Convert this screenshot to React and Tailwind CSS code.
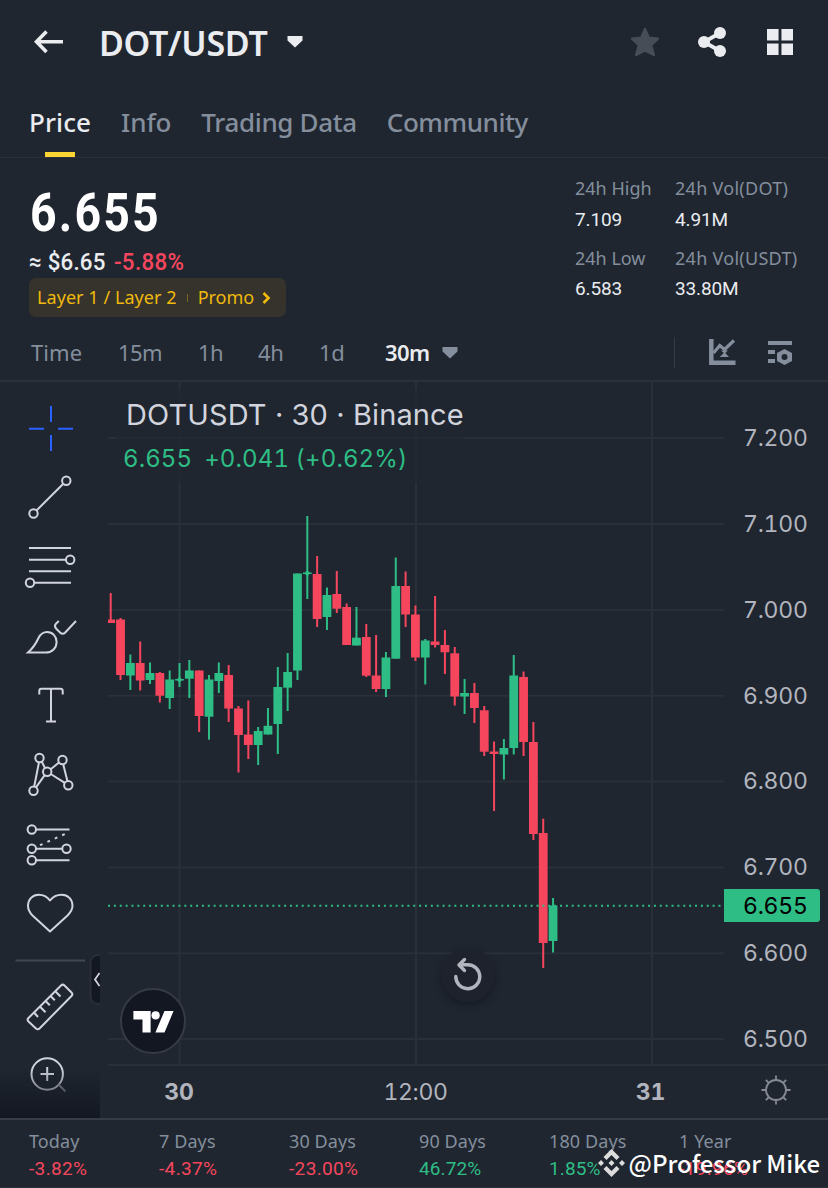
import React from "react";

const UP = "#2ebd85";
const DOWN = "#f6465d";

// [colour, high, body top, body bottom, low]
const candles = [
  [DOWN, 593, 619.5, 623, 623], [DOWN, 618, 619.5, 675, 680], [UP, 654.5, 663, 675.5, 690],
  [DOWN, 641.5, 663, 680.5, 690.5], [UP, 662.5, 673, 680, 684], [DOWN, 672, 673, 695.7, 702.5],
  [UP, 670.5, 679.5, 698, 709], [UP, 663, 679, 680.5, 687], [UP, 660, 670.5, 678.7, 698],
  [DOWN, 670.5, 670.5, 716, 732], [UP, 675, 679.5, 716.7, 739.7], [UP, 662.5, 673, 681, 693],
  [DOWN, 665, 675, 708.5, 722], [DOWN, 706, 708.5, 735, 772.5], [DOWN, 700.5, 734.5, 745, 759],
  [UP, 727, 731, 745, 765], [UP, 708, 725.8, 734.5, 734.5], [UP, 667, 687, 724, 754],
  [UP, 653, 672, 687.7, 711], [UP, 573.5, 573.5, 670.5, 680], [UP, 516, 572.5, 574, 599],
  [DOWN, 556, 574, 619, 627], [UP, 587.5, 595, 617, 630], [DOWN, 571, 594, 608.7, 613],
  [DOWN, 603.5, 607, 645, 645], [UP, 607, 637.7, 645.5, 645.5], [DOWN, 624, 637, 675.7, 677],
  [DOWN, 635, 675.5, 689, 692], [UP, 652, 657.5, 689, 697], [UP, 557.5, 586, 658.7, 658.7],
  [DOWN, 571.5, 586, 614.5, 627], [DOWN, 605.5, 614.5, 657.5, 661], [UP, 639, 640.5, 657.5, 684.5],
  [DOWN, 596, 641.5, 645, 647.5], [DOWN, 630, 645, 652.3, 674], [DOWN, 647, 653.3, 696.5, 705.5],
  [UP, 679, 693, 696.5, 714], [DOWN, 683, 693, 708, 723], [DOWN, 706, 710.3, 751.7, 756],
  [DOWN, 741.5, 751.5, 754, 811], [UP, 739, 748, 754.5, 779.5], [UP, 655, 675.5, 748, 754.5],
  [DOWN, 671.5, 677, 742, 756], [DOWN, 722, 742, 834, 840], [DOWN, 818.7, 833, 943, 968],
  [UP, 898, 905.5, 941, 952.5],
];

const gridY = [438, 524, 610, 695.8, 781.6, 867.4, 953.2, 1039];
const gridX = [179.5, 416, 652];

function Plot() {
  return (
    <svg className="block h-[682px] w-[616px] shrink-0" viewBox="108 382 616 682">
      <g stroke="#2a2f38" strokeWidth="2">
        {gridY.map((y) => <path key={y} d={`M108 ${y}H724`} />)}
        {gridX.map((x) => <path key={x} d={`M${x} 382V1064`} />)}
      </g>
      {candles.map(([c, hi, top, bot, lo], i) => {
        const x = 110.7 + i * 9.83;
        return (
          <g key={i} fill={c}>
            <rect x={x - 1} y={hi} width="2" height={lo - hi} />
            <rect x={x - 4.4} y={top} width="8.8" height={bot - top} />
            {bot - top < 2 && <circle cx={x} cy={(top + bot) / 2} r="2.2" />}
          </g>
        );
      })}
      <path d="M108 905.8H724" stroke={UP} strokeWidth="2" strokeDasharray="2 3.87" />
    </svg>
  );
}

function Tool({ top, height = 69, color = "#d1d4dc", children }) {
  return (
    <svg width="100" height={height} viewBox={`0 ${top} 100 ${height}`} className="block shrink-0" fill="none" stroke={color} strokeWidth="2">
      {children}
    </svg>
  );
}

function Toolbar() {
  return (
    <div className="relative flex h-[736px] w-[100px] shrink-0 flex-col overflow-hidden pt-[12px]">
      <div className="absolute bottom-0 left-0 h-[50px] w-full bg-linear-to-b from-[#131722]/0 to-[#131722]" />
      <Tool top={394} color="#2962ff">
        <path d="M51 406V422M51 435V451M29 428.800H44M58 428.800H73" />
      </Tool>
      <Tool top={463}>
        <circle cx="66.3" cy="480.7" r="4.2" /><circle cx="33.5" cy="513.5" r="4.2" />
        <path d="M36.5 510.5L63.3 483.7" />
      </Tool>
      <Tool top={532}>
        <path d="M29 548H71M29 559.700H66M29 571.300H71M34 582.700H71" />
        <circle cx="70.2" cy="559.7" r="4.2" /><circle cx="30" cy="582.7" r="4.2" />
      </Tool>
      <Tool top={601}>
        <path d="M28 652.600C33 648 36 643.500 38.500 638C40.500 634 43.500 632 47.200 632C52.500 632 56.600 636.500 56.600 642C56.600 648 52 652.600 46 652.600Z" />
        <path d="M58.800 621L56.200 623.400C54.800 624.800 54.800 627 56 628.500L60.300 632.800C61.500 634 63.700 634 65 632.800L76 621" />
      </Tool>
      <Tool top={670}>
        <path d="M39.300 694.500V691C39.300 689.500 40 688.800 41.300 688.800H60.500C62 688.800 62.700 689.500 62.700 691V694.500M51 689V721.500M46 721.500H56" />
      </Tool>
      <Tool top={739}>
        <circle cx="39.500" cy="758" r="4.200" /><circle cx="62.500" cy="760" r="4.200" />
        <circle cx="47.200" cy="771.700" r="4.200" /><circle cx="33.500" cy="790.700" r="4.200" /><circle cx="68.300" cy="785.200" r="4.200" />
        <path d="M39 762.200L34.200 786.500M41.800 761.700L45 768M50.700 769.200L59 762.500M44.700 775.200L36 787.400M50.700 774L64.800 782.800M63.200 764.200L67.400 781" />
      </Tool>
      <Tool top={808}>
        <circle cx="31.800" cy="829.500" r="4.200" /><circle cx="31.800" cy="848.700" r="4.200" /><circle cx="31.800" cy="860.300" r="4.200" /><circle cx="66.500" cy="848.700" r="4.200" />
        <path d="M36 829.500H69.500M36 848.700H62M36 860.300H69.500" />
        <path d="M40 845.200L69 832.200" strokeDasharray="2.800 5.300" />
      </Tool>
      <Tool top={877}>
        <path d="M50 900.500C47 896.500 43 894.700 38.800 894.700C32.500 894.700 28 899.500 28 905.800C28 910 29.500 912.500 32.500 915.500L50 931.500L67.500 915.500C70.500 912.500 72.500 910 72.500 905.800C72.500 899.500 68 894.700 61.700 894.700C57.500 894.700 53 896.500 50 900.500Z" strokeLinejoin="round" />
      </Tool>
      <Tool top={946} height={29}>
        <path d="M15.500 960.500H85" stroke="#434651" />
      </Tool>
      <Tool top={975} height={66}>
        <path d="M61 985.500C62 984.500 63.500 984.500 64.500 985.500L71.500 992.500C72.500 993.500 72.500 995 71.500 996L39.500 1028.500C38.500 1029.500 37 1029.500 36 1028.500L28.500 1021.500C27.500 1020.500 27.500 1019 28.500 1018ZM34.500 1013L38 1017M40.300 1007L45.500 1012.300M46 1001.500L49.800 1005.300M51 996.500L54.800 1000.300M55.500 991.500L60.500 996.500" />
      </Tool>
      <Tool top={1041} height={77}>
        <circle cx="47.200" cy="1074" r="15.700" />
        <path d="M40.500 1074H54M47.200 1067V1081" />
        <path d="M58.500 1084.500L65.500 1091.500" stroke="#8a8d97" />
      </Tool>
      <svg className="absolute right-0 top-[572px]" width="11" height="52" viewBox="89 954 11 52" fill="none">
        <path d="M101 955H99C94 955 90.500 958 90.500 963V996C90.500 1001 94 1004 99 1004H101" fill="#131722" stroke="#2a2e39" strokeWidth="2" />
        <path d="M99.500 973L95 979.500L99.500 986" stroke="#d1d4dc" strokeWidth="1.800" />
      </svg>
    </div>
  );
}

const prices = ["7.200", "7.100", "7.000", "6.900", "6.800", "6.700", "6.600", "6.500"];

function Chart() {
  return (
    <div className="flex h-[736px]">
      <Toolbar />
      <div className="relative flex w-[728px] flex-col font-['Inter',sans-serif] tabular-nums">
        <div className="flex h-[682px] pl-[8px]">
          <Plot />
          <div className="relative w-[104px]">
            <div className="flex flex-col pl-[19px] pt-[13px] text-[23px] text-[#b2b5be] tracking-[-0.25px]">
              {prices.map((p) => <div key={p} className="h-[85.85px] leading-[86px]">{p}</div>)}
            </div>
            <div className="absolute left-0 top-[507px] flex h-[33px] w-[96px] items-center rounded-r-[3px] bg-[#2ebd85] pl-[19px] pt-[2px] text-[23px] text-black tracking-[-0.25px]">6.655</div>
          </div>
        </div>
        <div className="ml-[8px] flex h-[54px] border-t-2 border-[#2a2f38] text-[23px] text-[#b2b5be]">
          <div className="flex w-[142px] items-center justify-center font-bold tracking-[0px]">30</div>
          <div className="flex w-[331px] items-center justify-center tracking-[-0.4px]">12:00</div>
          <div className="flex w-[139px] items-center justify-center font-bold tracking-[0px]">31</div>
          <div className="flex flex-1 items-center justify-center pb-[4px] pl-[3px]">
            <svg width="30" height="30" viewBox="0 0 30 30" fill="none" stroke="#868993" strokeWidth="1.800">
              <circle cx="15" cy="15" r="10" />
              <path d="M15 .5V5M15 25V29.500M.5 15H5M25 15H29.500M4.800 4.800L8 8M22 22L25.200 25.200M25.200 4.800L22 8M8 22L4.800 25.200" />
            </svg>
          </div>
        </div>
        <div className="absolute left-[16px] top-[8px] bg-[#1f2630]/60 pb-[6px] pl-[7px]">
          <div className="flex h-[50px] items-center whitespace-nowrap text-[29px] text-[#d1d4dc] tracking-[0.1px] proportional-nums"><span className="ml-[3px]">DOTUSDT · 30 · Binance</span></div>
          <div className="flex h-[37px] items-center gap-[12px] whitespace-nowrap text-[24px] text-[#2ebd85] tracking-[0.1px]"><span>6.655</span><span>+0.041 (+0.62%)</span></div>
        </div>
        <div className="absolute left-[20px] top-[606px] flex size-[66px] items-center justify-center rounded-full border-2 border-[#363a45] bg-[#131722]">
          <svg className="mt-px" width="41" height="22" viewBox="0 0 42 23" fill="#fff"><path d="M0 0H18V22.500H9.500V9H0ZM32.500 0H42L32.500 22.500H23Z" /><circle cx="23.200" cy="4.500" r="4.300" /></svg>
        </div>
        <div className="absolute left-[341px] top-[566px] flex size-[54px] items-center justify-center rounded-full bg-[#1e222d] shadow-[0_3px_6px_#131722aa]">
          <svg width="30" height="36" viewBox="453 957 30 36" fill="none" stroke="#b2b5be" strokeWidth="3.400" strokeLinecap="round" strokeLinejoin="round"><path d="M455.800 976.500A12 12 0 1 0 467.800 964.700H459M464.500 959.500L459 965L464.500 970.500" /></svg>
        </div>
      </div>
    </div>
  );
}

const stats = [
  ["24h High", "7.109"], ["24h Vol(DOT)", "4.91M"], ["24h Low", "6.583"], ["24h Vol(USDT)", "33.80M"],
];
const periods = [
  ["Today", "-3.82%"], ["7 Days", "-4.37%"], ["30 Days", "-23.00%"], ["90 Days", "46.72%"], ["180 Days", "1.85%"], ["1 Year", "-19.96%"],
];

export default function App() {
  return (
    <div className="relative flex h-[1188px] w-[828px] flex-col overflow-hidden bg-[#1f2630] font-['Noto_Sans',sans-serif] text-[#eaecef]">
      <header className="flex h-[86px] items-center pb-[2px] pl-[34px] pr-[35px]">
        <svg width="29" height="24" viewBox="0 0 29 24" fill="none" stroke="#eaecef" strokeWidth="3.600"><path d="M12.500 1.500L2.500 11.800L12.500 22M2.500 11.800H29" /></svg>
        <h1 className="ml-[36px] whitespace-nowrap pt-[2px] text-[34px] font-semibold leading-none tracking-[-0.3px]">DOT/USDT</h1>
        <svg className="ml-[20px]" width="16" height="12" viewBox="0 0 16 12" fill="#eaecef"><path d="M.5 0H15.500V4.500L8 11.500L.5 4.500Z" /></svg>
        <div className="flex-1" />
        <svg width="30" height="30" viewBox="0 0 30 30" fill="#474d57" stroke="#474d57" strokeWidth="2.400" strokeLinejoin="round"><path d="M15 2L18.800 10.800L28 11.700L21.200 18.200L23.800 28L15 23.500L6.200 28L8.800 18.200L2 11.700L11.200 10.800Z" /></svg>
        <svg className="ml-[38px]" width="28" height="30" viewBox="0 0 28 30" fill="#eaecef"><circle cx="22" cy="6" r="6" /><circle cx="22" cy="24" r="6" /><circle cx="6" cy="15" r="6" /><path d="M22 6L6 15L22 24" fill="none" stroke="#eaecef" strokeWidth="3.800" /></svg>
        <svg className="ml-[41px]" width="26" height="26" viewBox="0 0 27 27" fill="#eaecef"><path d="M0 0H12V12H0ZM15 0H27V12H15ZM0 15H12V27H0ZM15 15H27V27H15Z" /></svg>
      </header>
      <nav className="flex h-[72px] items-center gap-[30px] border-b border-[#2b3139] pl-[29px] text-[26px] font-medium text-[#848e9c]">
        <div className="relative flex h-full items-center pt-[2px] text-[#eaecef]"><span className="tracking-[0.1px]">Price</span><div className="absolute bottom-0 left-[16px] h-[5px] w-[30px] bg-[#fcd535]" /></div>
        <span className="pt-[2px] tracking-[-0.1px]">Info</span><span className="pt-[2px] tracking-[-0.35px]">Trading Data</span><span className="pt-[2px] tracking-[-0.45px]">Community</span>
      </nav>
      <section className="flex h-[167px]">
        <div className="flex w-[546px] flex-col pl-[29px] pt-[22px]">
          <div className="ml-px flex h-[64px] origin-left scale-x-[0.86] items-center font-['Roboto',sans-serif] text-[54px] font-bold tracking-[2.500px] text-white">6.655</div>
          <div className="flex h-[34px] origin-left scale-x-[0.93] items-center gap-[9px] pt-[2px] font-['Roboto',sans-serif] text-[24px] font-medium tracking-[0.2px]"><span>≈ $6.65</span><span className="text-[#f6465d] tracking-[0.4px]">-5.88%</span></div>
          <div className="flex h-[39px] w-[257px] items-center rounded-[7px] bg-[#35332c] pl-[8px] text-[18px] text-[#f0b90b]">
            <span className="whitespace-nowrap tracking-[0.06px]">Layer 1 / Layer 2</span>
            <span className="ml-[10px] h-[8px] w-px bg-[#7a6420]" />
            <span className="ml-[10px]">Promo</span>
            <svg className="ml-[8px]" width="9" height="12" viewBox="0 0 9 12" fill="none" stroke="#f0b90b" strokeWidth="2.600"><path d="M1.500 1L6.500 6L1.500 11" /></svg>
          </div>
        </div>
        <div className="grid h-[140px] grid-cols-[100px_1fr] grid-rows-[69.500px_69.500px] pl-[29px] pt-[15px]">
          {stats.map(([k, v]) => (
            <div key={k} className="whitespace-nowrap">
              <div className={k.includes("Vol") ? "flex h-[31px] items-center text-[18px] tracking-[0.280px] text-[#848e9c]" : "flex h-[31px] items-center text-[18px] text-[#848e9c]"}>{k}</div>
              <div className="flex h-[31px] items-center pt-px font-['Roboto',sans-serif] text-[19px] tracking-[-0.15px]">{v}</div>
            </div>
          ))}
        </div>
      </section>
      <div className="flex h-[57px] items-center border-b-2 border-[#2b3139] pl-[31px] text-[22px] text-[#848e9c]">
        <span className="w-[87px] tracking-[0.1px]">Time</span><span className="w-[80px] tracking-[-0.6px]">15m</span><span className="w-[60px] tracking-[-0.6px]">1h</span><span className="w-[61px] tracking-[-0.3px]">4h</span><span className="w-[66px] tracking-[-0.4px]">1d</span>
        <span className="w-[57px] font-semibold text-[#eaecef] tracking-[-0.6px]">30m</span>
        <svg width="16" height="12" viewBox="0 0 16 12" fill="#848e9c"><path d="M.5 0H15.500V4.500L8 11.500L.5 4.500Z" /></svg>
        <div className="ml-[216px] h-[31px] w-px bg-[#363c46]" />
        <svg className="ml-[34px]" width="27" height="27" viewBox="0 0 27 27" fill="none" stroke="#848e9c"><path d="M2.300 0V23.700H26.500" strokeWidth="4.500" /><path d="M4.500 14L10.800 6.500L15.500 10.500L25 1.500" strokeWidth="3.200" /><path d="M10.700 18H20L16.300 14L19 11.500H12L14.800 14Z" fill="#848e9c" stroke="none" /></svg>
        <svg className="ml-[32px]" width="25" height="26" viewBox="0 0 25 26" fill="#848e9c"><path d="M0 1H24V5H0ZM0 10H7V14H0ZM0 19H7V23H0Z" /><path fillRule="evenodd" d="M16.500 9L24 13V21L16.500 25L9 21V13ZM16.500 14A3 3 0 1 0 16.500 20A3 3 0 1 0 16.500 14Z" /></svg>
      </div>
      <Chart />
      <footer className="flex h-[70px] border-b border-t-2 border-b-[#2b3139] border-t-[#363c46] pl-[29px] pt-[8px]">
        {periods.map(([k, v]) => (
          <div key={k} className="w-[130px] shrink-0 whitespace-nowrap">
            <div className="flex h-[27px] items-center text-[18px] tracking-[0.1px] text-[#848e9c]">{k}</div>
            <div className={v[0] === "-" ? "flex h-[29px] items-center font-['Roboto',sans-serif] text-[19px] tracking-[0.350px] text-[#f6465d]" : "flex h-[29px] items-center font-['Roboto',sans-serif] text-[19px] tracking-[0.1px] text-[#2ebd85]"}>{v}</div>
          </div>
        ))}
      </footer>
      <div className="absolute bottom-[10px] right-[8px] flex h-[30px] items-center gap-[4px] whitespace-nowrap font-['Noto_Sans_CJK_SC',sans-serif] text-[24px] font-medium text-white">
        <svg width="27" height="28" viewBox="0 0 27 28" fill="#dcdcdc"><path d="M13.500 0L21.500 8L18.500 11L13.500 6L8.500 11L5.500 8ZM13.500 28L21.500 20L18.500 17L13.500 22L8.500 17L5.500 20ZM13.500 11L16.500 14L13.500 17L10.500 14ZM3 11L6 14L3 17L0 14ZM24 11L27 14L24 17L21 14Z" /></svg>
        <span>@Professor Mike</span>
      </div>
    </div>
  );
}
